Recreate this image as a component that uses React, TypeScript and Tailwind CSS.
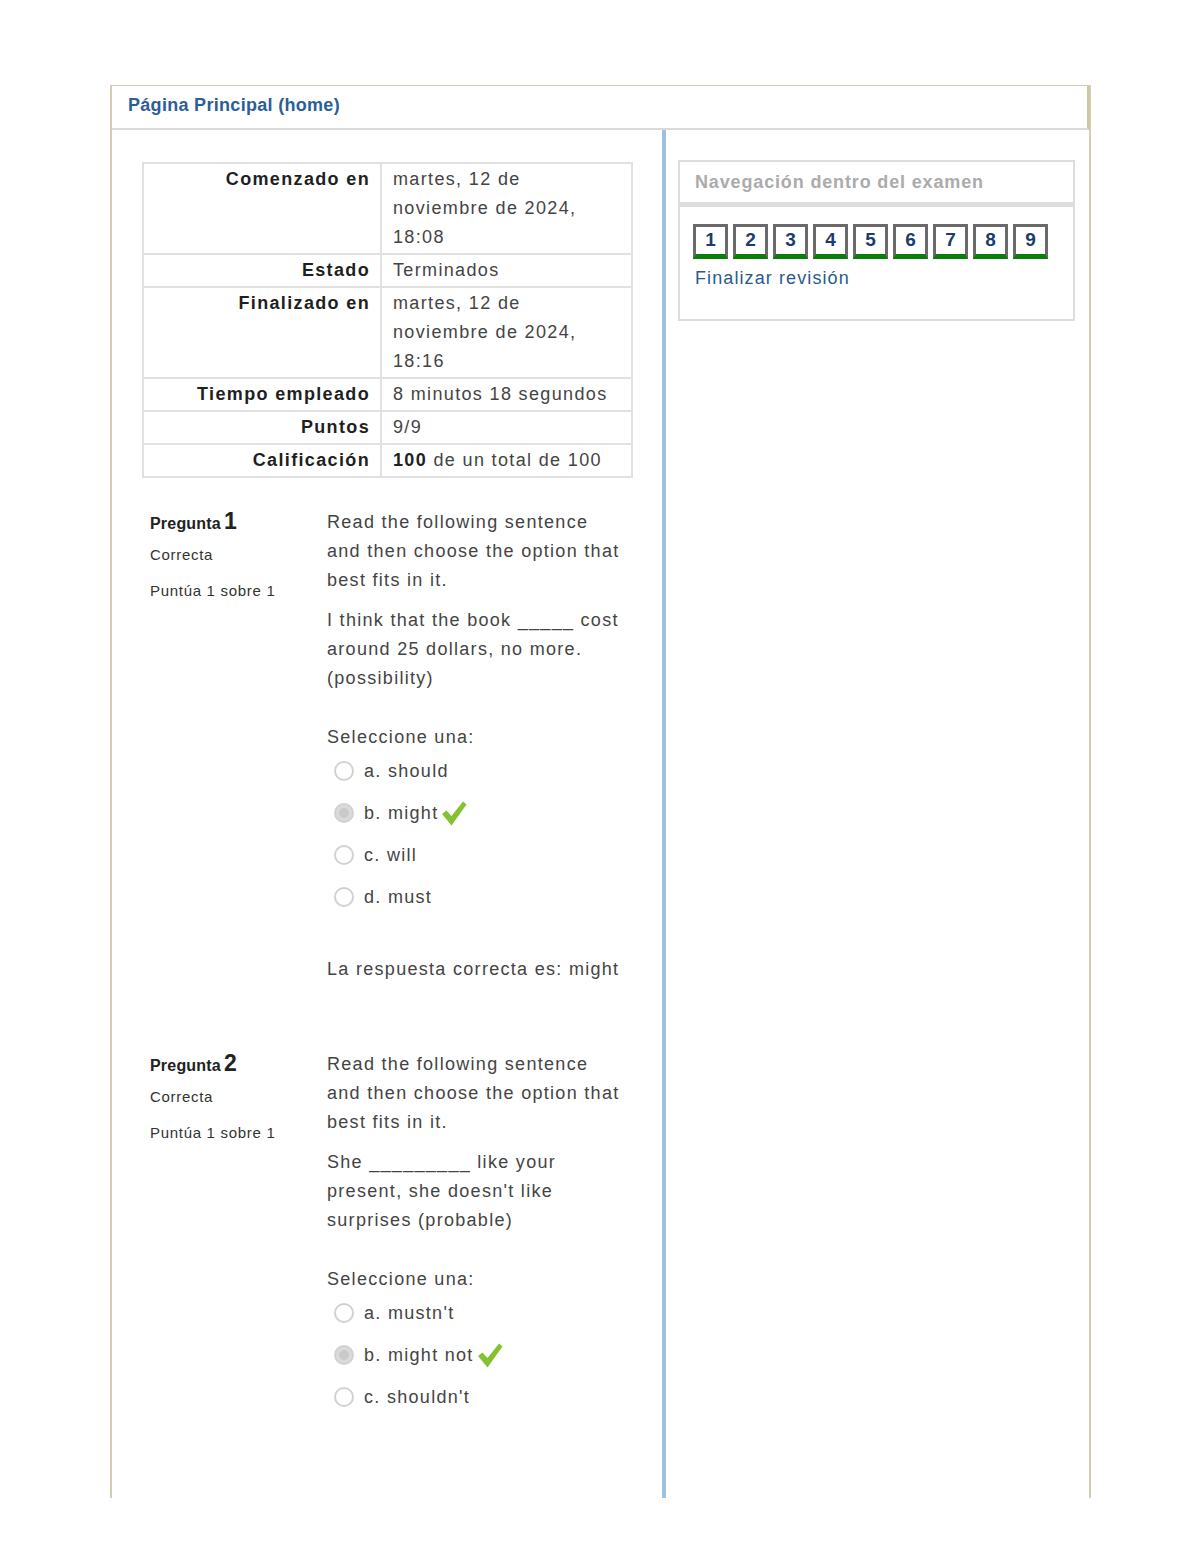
import type { ReactNode } from 'react';

const summary: { label: string; value: ReactNode }[] = [
  { label: 'Comenzado en', value: 'martes, 12 de noviembre de 2024, 18:08' },
  { label: 'Estado', value: 'Terminados' },
  { label: 'Finalizado en', value: 'martes, 12 de noviembre de 2024, 18:16' },
  { label: 'Tiempo empleado', value: '8 minutos 18 segundos' },
  { label: 'Puntos', value: '9/9' },
  {
    label: 'Calificación',
    value: (
      <>
        <b className="text-[#1f1f1f]">100</b> de un total de 100
      </>
    ),
  },
];

type Question = {
  num: number;
  intro: string;
  sentence: string;
  options: string[];
  answer: number;
  feedback?: string;
};

const questions: Question[] = [
  {
    num: 1,
    intro: 'Read the following sentence and then choose the option that best fits in it.',
    sentence: 'I think that the book _____ cost around 25 dollars, no more. (possibility)',
    options: ['a. should', 'b. might', 'c. will', 'd. must'],
    answer: 1,
    feedback: 'La respuesta correcta es: might',
  },
  {
    num: 2,
    intro: 'Read the following sentence and then choose the option that best fits in it.',
    sentence: "She _________ like your present, she doesn't like surprises (probable)",
    options: ["a. mustn't", 'b. might not', "c. shouldn't"],
    answer: 1,
  },
];

function Check() {
  return (
    <svg width="26" height="26" viewBox="0 0 26 26" className="ml-[3px]">
      <polygon points="1,14 5.5,10.5 10.5,16 22,1.5 25.5,4.5 10.5,25.5" fill="#84c232" />
    </svg>
  );
}

function Radio({ checked }: { checked: boolean }) {
  return checked ? (
    <span className="flex h-[20px] w-[20px] items-center justify-center rounded-full border-2 border-[#d2d2d2] bg-[#dadada]">
      <span className="h-[10px] w-[10px] rounded-full bg-[#c9c9c9]" />
    </span>
  ) : (
    <span className="h-[20px] w-[20px] rounded-full border-2 border-[#d2d2d2] bg-white" />
  );
}

function QuestionBlock({ q, first }: { q: Question; first: boolean }) {
  return (
    <div className={`flex ${first ? 'mt-[30px]' : 'mt-[66px]'}`}>
      <div className="w-[185px] shrink-0 pl-[8px] text-[#222]">
        <div className="-mt-[4px] flex h-[28px] items-baseline">
          <span className="text-[16px] font-bold tracking-[0.2px]">Pregunta</span>
          <span className="ml-[3px] text-[23px] font-bold">{q.num}</span>
        </div>
        <div className="mt-[9px] text-[15px] leading-[28px] tracking-[0.7px] text-[#333]">Correcta</div>
        <div className="mt-[8px] text-[15px] leading-[28px] tracking-[0.7px] text-[#333]">Puntúa 1 sobre 1</div>
      </div>
      <div className="w-[298px] text-[18px] leading-[29px] tracking-[1.3px] text-[#444]">
        <p>{q.intro}</p>
        <p className="mt-[11px]">{q.sentence}</p>
        <p className="mt-[30px]">Seleccione una:</p>
        <div className="-mt-[2px]">
          {q.options.map((opt, i) => (
            <div key={opt} className="flex h-[42px] items-center pl-[7px]">
              <Radio checked={i === q.answer} />
              <span className="ml-[10px]">{opt}</span>
              {i === q.answer && <Check />}
            </div>
          ))}
        </div>
        {q.feedback && <p className="mt-[37px]">{q.feedback}</p>}
      </div>
    </div>
  );
}

export default function App() {
  return (
    <div className="min-h-[1553px] w-[1200px] bg-white pt-[85px] font-['Liberation_Sans',Arial,sans-serif]">
      <div className="ml-[110px] w-[981px] border-x-2 border-t border-[#d3ceb1]">
        <div className="flex h-[44px] items-center border-b-2 border-r-2 border-[#dadada] border-r-[#cbc5a4] pb-[3px] pl-[16px]">
          <a href="#" className="text-[18px] font-bold tracking-[0.3px] text-[#2c5e98]">
            Página Principal (home)
          </a>
        </div>

        <div className="flex h-[1368px]">
          <div className="w-[550px] shrink-0 pl-[30px] pr-[29px] pt-[32px]">
            <table className="w-[491px] border-collapse text-[18px] leading-[29px] tracking-[1.35px]">
              <tbody>
                {summary.map((row) => (
                  <tr key={row.label}>
                    <th className="w-[238px] border-2 border-[#e1e1e1] py-px pr-[10px] text-right align-top font-bold text-[#1f1f1f]">
                      {row.label}
                    </th>
                    <td className="border-2 border-[#e1e1e1] py-px pl-[11px] pr-[20px] text-[#444]">{row.value}</td>
                  </tr>
                ))}
              </tbody>
            </table>

            {questions.map((q, i) => (
              <QuestionBlock key={q.num} q={q} first={i === 0} />
            ))}
          </div>

          <div className="flex-1 border-l-4 border-[#9ec1df] pl-[12px] pr-[14px] pt-[30px]">
            <div className="flex h-[44px] items-center border-2 border-[#dddddd] pl-[15px] text-[18px] font-bold tracking-[0.85px] text-[#ababab]">
              Navegación dentro del examen
            </div>
            <div className="h-[117px] border-2 border-t-[3px] border-[#dddddd] pl-[13px] pt-[17px]">
              <div className="flex gap-[5px]">
                {[1, 2, 3, 4, 5, 6, 7, 8, 9].map((n) => (
                  <a
                    key={n}
                    href="#"
                    className="flex h-[35px] w-[35px] items-center justify-center border-[3px] border-b-[5px] border-[#6a6a6a] border-b-[#0b7d0b] bg-white text-[19px] font-bold text-[#1c3c6c]"
                  >
                    {n}
                  </a>
                ))}
              </div>
              <a href="#" className="mt-[5px] block pl-[2px] text-[18px] leading-[29px] tracking-[1.1px] text-[#2a5a8c]">
                Finalizar revisión
              </a>
            </div>
          </div>
        </div>
      </div>
    </div>
  );
}
